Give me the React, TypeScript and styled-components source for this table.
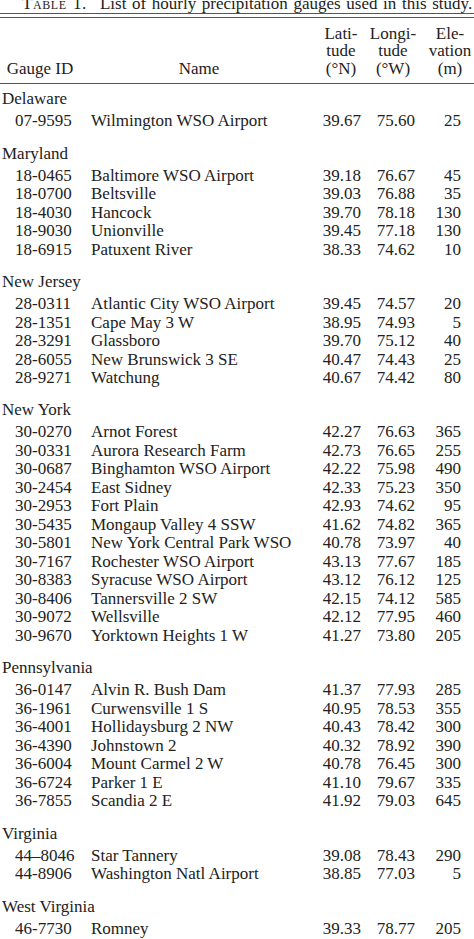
import React from 'react';
import styled, { createGlobalStyle } from 'styled-components';

const GlobalStyle = createGlobalStyle`
  html, body {
    margin: 0;
    padding: 0;
    background: #fff;
  }
  body {
    font-family: "Liberation Serif", "Times New Roman", serif;
    color: #222;
    overflow: hidden;
  }
`;

const COLUMNS = '80px 238px 46px 58px 52px';

const Page = styled.div`
  width: 474px;
  font-size: 17px;
`;

const Caption = styled.div`
  margin-top: -5.5px;
  padding-left: 22px;
  line-height: 18.5px;
  white-space: nowrap;
  word-spacing: 1.4px;
`;

const CaptionLabel = styled.span`
  font-variant: small-caps;
  letter-spacing: 0.6px;
  margin-right: 13px;
`;

const DoubleRule = styled.div`
  height: 2.7px;
  border-top: 1.4px solid #555;
  border-bottom: 1.4px solid #555;
`;

const HeadRow = styled.div`
  display: grid;
  grid-template-columns: ${COLUMNS};
  align-items: end;
  padding: 7px 0 6px;
  border-bottom: 1.5px solid #555;
  line-height: 17.5px;
`;

const HeadCell = styled.div<{ $nudge?: number }>`
  text-align: center;
  padding-left: ${(p) => (p.$nudge ?? 0)}px;
`;

const Body = styled.div`
  padding-top: 6px;
`;

const Section = styled.div`
  & + & {
    margin-top: 13.8px;
  }
`;

const StateRow = styled.div`
  line-height: 18.5px;
  padding: 0 0 3.6px 2px;
`;

const Row = styled.div`
  display: grid;
  grid-template-columns: ${COLUMNS};
  line-height: 18.5px;
  white-space: nowrap;
`;

const IdCell = styled.div`
  padding-left: 15px;
`;

const NameCell = styled.div`
  padding-left: 11px;
`;

const NumCell = styled.div<{ $pad: number }>`
  text-align: right;
  padding-right: ${(p) => p.$pad}px;
`;

type Gauge = [string, string, string, string, string];

const sections: { state: string; gauges: Gauge[] }[] = [
  {
    state: 'Delaware',
    gauges: [['07-9595', 'Wilmington WSO Airport', '39.67', '75.60', '25']],
  },
  {
    state: 'Maryland',
    gauges: [
      ['18-0465', 'Baltimore WSO Airport', '39.18', '76.67', '45'],
      ['18-0700', 'Beltsville', '39.03', '76.88', '35'],
      ['18-4030', 'Hancock', '39.70', '78.18', '130'],
      ['18-9030', 'Unionville', '39.45', '77.18', '130'],
      ['18-6915', 'Patuxent River', '38.33', '74.62', '10'],
    ],
  },
  {
    state: 'New Jersey',
    gauges: [
      ['28-0311', 'Atlantic City WSO Airport', '39.45', '74.57', '20'],
      ['28-1351', 'Cape May 3 W', '38.95', '74.93', '5'],
      ['28-3291', 'Glassboro', '39.70', '75.12', '40'],
      ['28-6055', 'New Brunswick 3 SE', '40.47', '74.43', '25'],
      ['28-9271', 'Watchung', '40.67', '74.42', '80'],
    ],
  },
  {
    state: 'New York',
    gauges: [
      ['30-0270', 'Arnot Forest', '42.27', '76.63', '365'],
      ['30-0331', 'Aurora Research Farm', '42.73', '76.65', '255'],
      ['30-0687', 'Binghamton WSO Airport', '42.22', '75.98', '490'],
      ['30-2454', 'East Sidney', '42.33', '75.23', '350'],
      ['30-2953', 'Fort Plain', '42.93', '74.62', '95'],
      ['30-5435', 'Mongaup Valley 4 SSW', '41.62', '74.82', '365'],
      ['30-5801', 'New York Central Park WSO', '40.78', '73.97', '40'],
      ['30-7167', 'Rochester WSO Airport', '43.13', '77.67', '185'],
      ['30-8383', 'Syracuse WSO Airport', '43.12', '76.12', '125'],
      ['30-8406', 'Tannersville 2 SW', '42.15', '74.12', '585'],
      ['30-9072', 'Wellsville', '42.12', '77.95', '460'],
      ['30-9670', 'Yorktown Heights 1 W', '41.27', '73.80', '205'],
    ],
  },
  {
    state: 'Pennsylvania',
    gauges: [
      ['36-0147', 'Alvin R. Bush Dam', '41.37', '77.93', '285'],
      ['36-1961', 'Curwensville 1 S', '40.95', '78.53', '355'],
      ['36-4001', 'Hollidaysburg 2 NW', '40.43', '78.42', '300'],
      ['36-4390', 'Johnstown 2', '40.32', '78.92', '390'],
      ['36-6004', 'Mount Carmel 2 W', '40.78', '76.45', '300'],
      ['36-6724', 'Parker 1 E', '41.10', '79.67', '335'],
      ['36-7855', 'Scandia 2 E', '41.92', '79.03', '645'],
    ],
  },
  {
    state: 'Virginia',
    gauges: [
      ['44\u20138046', 'Star Tannery', '39.08', '78.43', '290'],
      ['44-8906', 'Washington Natl Airport', '38.85', '77.03', '5'],
    ],
  },
  {
    state: 'West Virginia',
    gauges: [['46-7730', 'Romney', '39.33', '78.77', '205']],
  },
];

export default function App() {
  return (
    <>
      <GlobalStyle />
      <Page>
        <Caption>
          <CaptionLabel>Table 1.</CaptionLabel>
          List of hourly precipitation gauges used in this study.
        </Caption>
        <DoubleRule />
        <HeadRow>
          <HeadCell>Gauge ID</HeadCell>
          <HeadCell>Name</HeadCell>
          <HeadCell>
            Lati-
            <br />
            tude
            <br />
            (°N)
          </HeadCell>
          <HeadCell>
            Longi-
            <br />
            tude
            <br />
            (°W)
          </HeadCell>
          <HeadCell $nudge={4}>
            Ele-
            <br />
            vation
            <br />
            (m)
          </HeadCell>
        </HeadRow>
        <Body>
          {sections.map((s) => (
            <Section key={s.state}>
              <StateRow>{s.state}</StateRow>
              {s.gauges.map(([id, name, lat, lon, elev]) => (
                <Row key={id}>
                  <IdCell>{id}</IdCell>
                  <NameCell>{name}</NameCell>
                  <NumCell $pad={3}>{lat}</NumCell>
                  <NumCell $pad={7}>{lon}</NumCell>
                  <NumCell $pad={13}>{elev}</NumCell>
                </Row>
              ))}
            </Section>
          ))}
        </Body>
      </Page>
    </>
  );
}
